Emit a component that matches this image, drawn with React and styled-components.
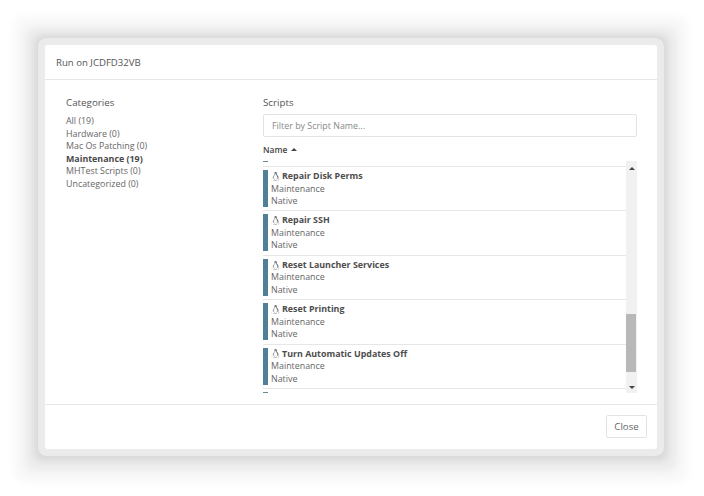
import React from 'react'
import styled, { createGlobalStyle } from 'styled-components'
import { FaLinux } from 'react-icons/fa'

const GlobalStyle = createGlobalStyle`
  html, body {
    margin: 0;
    background: #fff;
  }
  body {
    font-family: "Open Sans", "Liberation Sans", sans-serif;
    font-size: 8.9px;
    color: #666;
  }
`

const Page = styled.div`
  width: 704px;
  height: 496px;
  overflow: hidden;
  padding: 45px 47px 47px 45px;
  box-sizing: border-box;
`

const Dialog = styled.div`
  width: 612px;
  height: 404px;
  background: #fff;
  border-radius: 3px;
  display: flex;
  flex-direction: column;
  box-shadow:
    0 0 0 7px #ebebeb,
    0 1px 6px 11px rgba(0, 0, 0, 0.07),
    0 2px 10px 20px rgba(0, 0, 0, 0.05),
    0 2px 10px 31px rgba(0, 0, 0, 0.03);
`

const Header = styled.div`
  height: 34px;
  flex: none;
  padding: 0 11px;
  display: flex;
  align-items: center;
  border-bottom: 1px solid #e6e6e6;
  font-size: 9.6px;
  color: #555;
`

const Body = styled.div`
  flex: 1;
  min-height: 0;
  display: flex;
  padding: 16px 20px 0 21px;
`

const Sidebar = styled.div`
  width: 197px;
  flex: none;
`

const SectionTitle = styled.div`
  font-size: 9.8px;
  line-height: 14px;
  color: #555;
  margin-bottom: ${p => p.$gap}px;
`

const CategoryItem = styled.div`
  line-height: 12.5px;
  font-size: 8.9px;
  font-weight: ${p => (p.$active ? 700 : 400)};
  color: ${p => (p.$active ? '#4a4a4a' : '#666')};
`

const Main = styled.div`
  flex: 1;
  min-width: 0;
`

const FilterInput = styled.input`
  display: block;
  width: 100%;
  height: 23px;
  box-sizing: border-box;
  border: 1px solid #e3e3e3;
  border-radius: 2px;
  padding: 0 8px;
  font: 8.9px "Open Sans", sans-serif;
  outline: none;
  &::placeholder {
    color: #888;
    opacity: 1;
  }
`

const SortHeader = styled.div`
  display: flex;
  align-items: center;
  gap: 4px;
  height: 14px;
  margin-top: 5px;
  font-size: 8.4px;
  font-weight: 600;
  color: #444;
`

const SortCaret = styled.span`
  width: 0;
  height: 0;
  border-left: 3px solid transparent;
  border-right: 3px solid transparent;
  border-bottom: 3px solid #444;
`

const ListFrame = styled.div`
  display: flex;
  margin-top: 5px;
  height: 232px;
`

const List = styled.div`
  flex: 1;
  min-width: 0;
`

const ClippedBar = styled.div`
  width: 5px;
  height: 1px;
  background: #6d8796;
`

const Rows = styled.div`
  margin: 4px 0 3px;
  border-bottom: 1px solid #e6e6e6;
`

const Row = styled.div`
  height: 44.4px;
  box-sizing: border-box;
  padding: 3px 0;
  display: flex;
  gap: 3px;
  border-top: 1px solid #e6e6e6;
`

const RowAccent = styled.div`
  width: 5px;
  flex: none;
  height: 37px;
  background: #4f8098;
`

const RowText = styled.div`
  line-height: 12.5px;
  color: #666;
`

const RowTitle = styled.div`
  display: flex;
  align-items: center;
  gap: 2px;
  font-weight: 700;
  color: #4d4d4d;
`

const Scrollbar = styled.div`
  width: 11px;
  flex: none;
  background: #f1f1f1;
  display: flex;
  flex-direction: column;
  align-items: center;
  padding: 6px 0 4px;
  box-sizing: border-box;
`

const Arrow = styled.span`
  width: 0;
  height: 0;
  flex: none;
  border-left: 3px solid transparent;
  border-right: 3px solid transparent;
  ${p => (p.$down ? 'border-top: 3px solid #444;' : 'border-bottom: 3px solid #444;')}
`

const Thumb = styled.div`
  width: 10px;
  height: 58px;
  background: #b8b8b8;
  margin: auto 1px 14px 0;
  flex: none;
`

const Footer = styled.div`
  height: 45px;
  flex: none;
  border-top: 1px solid #e6e6e6;
  display: flex;
  align-items: center;
  justify-content: flex-end;
  padding: 0 10px 1px 0;
  box-sizing: border-box;
`

const CloseButton = styled.button`
  width: 41px;
  height: 23px;
  border: 1px solid #e3e3e3;
  border-radius: 2px;
  background: #fff;
  color: #666;
  font: 9.7px "Open Sans", sans-serif;
  padding: 0;
`

const categories = [
  { name: 'All (19)' },
  { name: 'Hardware (0)' },
  { name: 'Mac Os Patching (0)' },
  { name: 'Maintenance (19)', active: true },
  { name: 'MHTest Scripts (0)' },
  { name: 'Uncategorized (0)' },
]

const scripts = ['Repair Disk Perms', 'Repair SSH', 'Reset Launcher Services', 'Reset Printing', 'Turn Automatic Updates Off']

export default function App() {
  return (
    <Page>
      <GlobalStyle />
      <Dialog>
        <Header>Run on JCDFD32VB</Header>
        <Body>
          <Sidebar>
            <SectionTitle $gap={5}>Categories</SectionTitle>
            {categories.map(c => (
              <CategoryItem key={c.name} $active={c.active}>{c.name}</CategoryItem>
            ))}
          </Sidebar>
          <Main>
            <SectionTitle $gap={4}>Scripts</SectionTitle>
            <FilterInput placeholder="Filter by Script Name..." readOnly />
            <SortHeader>Name <SortCaret /></SortHeader>
            <ListFrame>
              <List>
                <ClippedBar />
                <Rows>
                  {scripts.map(name => (
                    <Row key={name}>
                      <RowAccent />
                      <RowText>
                        <RowTitle><FaLinux size={9} color="#666" />{name}</RowTitle>
                        <div>Maintenance</div>
                        <div>Native</div>
                      </RowText>
                    </Row>
                  ))}
                </Rows>
                <ClippedBar />
              </List>
              <Scrollbar>
                <Arrow />
                <Thumb />
                <Arrow $down />
              </Scrollbar>
            </ListFrame>
          </Main>
        </Body>
        <Footer>
          <CloseButton>Close</CloseButton>
        </Footer>
      </Dialog>
    </Page>
  )
}
